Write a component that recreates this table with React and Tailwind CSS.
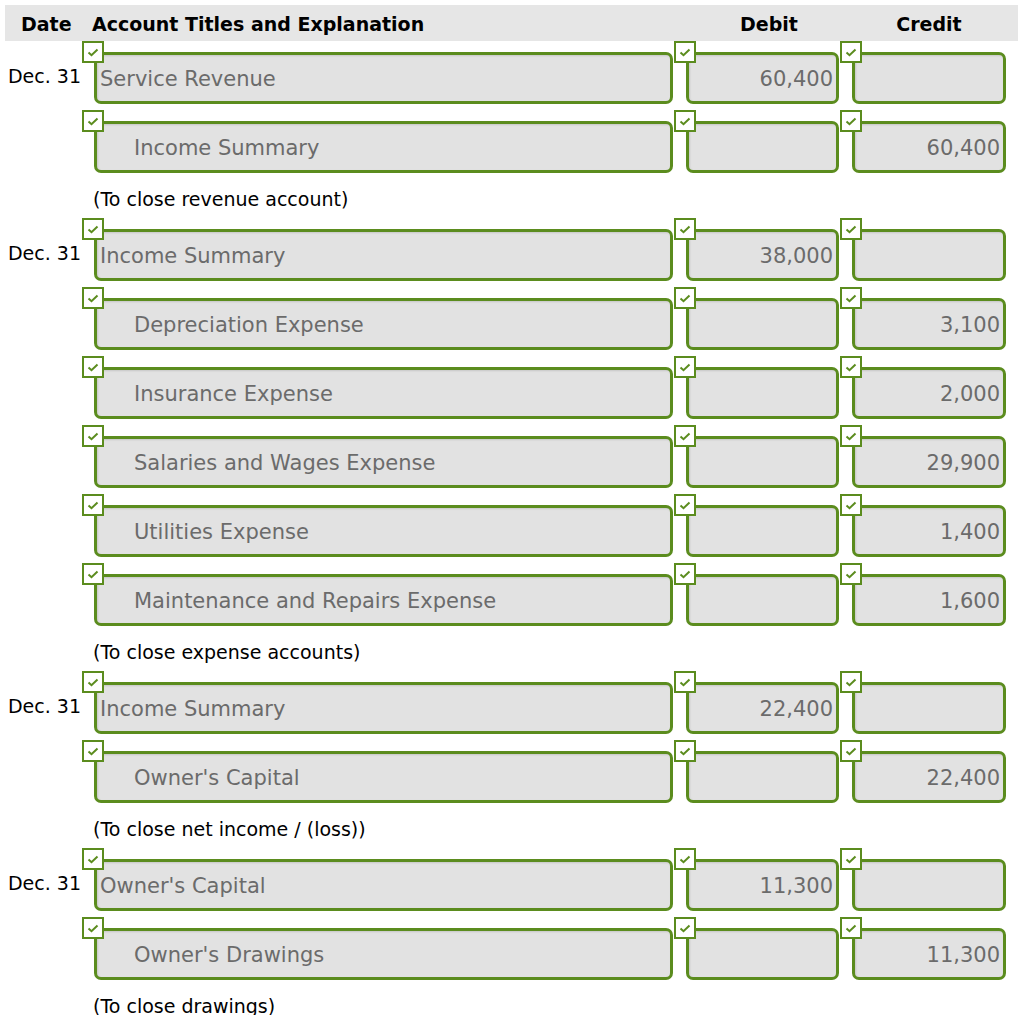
import React from "react";

const sections = [
  {
    rows: [
      { date: "Dec. 31", account: "Service Revenue", indent: false, debit: "60,400", credit: "" },
      { account: "Income Summary", indent: true, debit: "", credit: "60,400" },
    ],
    note: "(To close revenue account)",
  },
  {
    rows: [
      { date: "Dec. 31", account: "Income Summary", indent: false, debit: "38,000", credit: "" },
      { account: "Depreciation Expense", indent: true, debit: "", credit: "3,100" },
      { account: "Insurance Expense", indent: true, debit: "", credit: "2,000" },
      { account: "Salaries and Wages Expense", indent: true, debit: "", credit: "29,900" },
      { account: "Utilities Expense", indent: true, debit: "", credit: "1,400" },
      { account: "Maintenance and Repairs Expense", indent: true, debit: "", credit: "1,600" },
    ],
    note: "(To close expense accounts)",
  },
  {
    rows: [
      { date: "Dec. 31", account: "Income Summary", indent: false, debit: "22,400", credit: "" },
      { account: "Owner's Capital", indent: true, debit: "", credit: "22,400" },
    ],
    note: "(To close net income / (loss))",
  },
  {
    rows: [
      { date: "Dec. 31", account: "Owner's Capital", indent: false, debit: "11,300", credit: "" },
      { account: "Owner's Drawings", indent: true, debit: "", credit: "11,300" },
    ],
    note: "(To close drawings)",
  },
];

function Check() {
  return (
    <div className="absolute left-[-12px] top-0 w-[22px] h-[22px] bg-white border-2 border-[#5b8c1e] flex items-center justify-center z-10">
      <svg width="12" height="9" viewBox="0 0 12 9">
        <path d="M1.5 4.5 L4.5 7.2 L10.5 1.5" fill="none" stroke="#5b8c1e" strokeWidth="2" />
      </svg>
    </div>
  );
}

function Field({ width, children, align = "left", indent = false }) {
  return (
    <div className="relative pt-[11px]" style={{ width }}>
      <Check />
      <div
        className={
          "h-[52px] rounded-[7px] border-[3px] border-[#5b8c1e] bg-[#e2e2e2] shadow-[inset_1px_1px_2px_rgba(0,0,0,0.12)] flex items-center pt-[3px] text-[21px] text-[#6b6b6b] " +
          (align === "right" ? "justify-end pr-[3px]" : indent ? "pl-[37px]" : "pl-[3px]")
        }
        style={{ fontFamily: '"DejaVu Sans", Verdana, sans-serif' }}
      >
        {children}
      </div>
    </div>
  );
}

export default function App() {
  const sans = { fontFamily: '"DejaVu Sans", Tahoma, sans-serif' };
  return (
    <div className="w-[1024px] h-[1015px] bg-white overflow-hidden pt-[5px]">
      <div
        className="mx-[5px] w-[1013px] h-[36px] bg-[#e6e6e6] flex items-center pt-[2px] text-[19px] font-bold text-black"
        style={{ fontFamily: '"DejaVu Sans", Verdana, sans-serif' }}
      >
        <div className="w-[87px] pl-[16px]">Date</div>
        <div className="w-[594px]">Account Titles and Explanation</div>
        <div className="w-[166px] text-center">Debit</div>
        <div className="w-[154px] text-center">Credit</div>
      </div>
      <div className="flex flex-col">
        {sections.map((s, si) => (
          <React.Fragment key={si}>
            {s.rows.map((r, ri) => (
              <div key={ri} className="h-[69px] flex">
                <div
                  className="w-[82px] pt-[11px] h-[63px] flex items-center justify-end pr-[1px] text-[19px] text-black"
                  style={sans}
                >
                  <span className="pb-[3px]">{r.date || ""}</span>
                </div>
                <div className="ml-[12px]">
                  <Field width={579} indent={r.indent}>
                    {r.account}
                  </Field>
                </div>
                <div className="ml-[13px]">
                  <Field width={153} align="right">
                    {r.debit}
                  </Field>
                </div>
                <div className="ml-[13px]">
                  <Field width={154} align="right">
                    {r.credit}
                  </Field>
                </div>
              </div>
            ))}
            <div className="h-[39px] flex items-center pt-[2px] pl-[93px] text-[19px] text-black" style={sans}>
              {s.note}
            </div>
          </React.Fragment>
        ))}
      </div>
    </div>
  );
}
